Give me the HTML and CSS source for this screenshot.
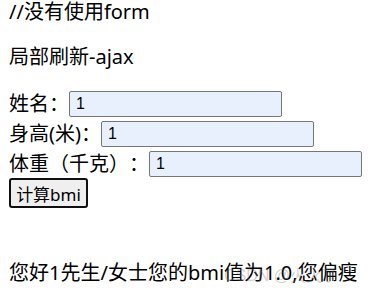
FILE: index.html
```html
<!DOCTYPE html>
<html lang="zh">
<head>
    <meta charset="UTF-8">
    <title>bmi</title>
    <link rel="stylesheet" href="styles.css">
</head>
<body>
    <div class="note">//没有使用form</div>
    <p class="title">局部刷新-ajax</p>
    <div class="form">
        <div class="row">姓名：<input type="text" class="field" value="1"></div>
        <div class="row">身高(米)：<input type="text" class="field" value="1"></div>
        <div class="row">体重（千克）：<input type="text" class="field" value="1"></div>
        <button type="button" class="btn">计算bmi</button>
    </div>
    <p class="result">您好1先生/女士您的bmi值为1.0,您偏瘦</p>
    <span class="mark">CSDN @火火了</span>
</body>
</html>
```

FILE: styles.css
```css
body {
    font-family: "Noto Sans", "Noto Sans CJK SC", sans-serif;
    font-size: 20px;
    color: #000;
    margin: 0 0 0 9px;
    background: #fff;
    position: relative;
    height: 297px;
    overflow: hidden;
    text-spacing-trim: space-all;
}
.note {
    line-height: 24px;
    margin: 0;
}
.title {
    margin: 21px 0 0;
    line-height: 24px;
}
.form {
    margin-top: 20px;
}
.row {
    height: 30px;
    line-height: 30px;
    display: flex;
    align-items: center;
}
.field {
    width: 213px;
    height: 26px;
    box-sizing: border-box;
    border: 1px solid #767676;
    border-radius: 2px;
    background-color: #e8f0fe;
    padding: 0 6px;
    font-family: "Liberation Sans", sans-serif;
    font-size: 16px;
    margin: 0;
}
.btn {
    margin-top: -1px;
    height: 30px;
    width: 79px;
    border: 2px solid #101010;
    border-radius: 3px;
    background-color: #efefef;
    font-family: "Noto Sans", "Noto Sans CJK SC", sans-serif;
    font-size: 17px;
    padding: 0;
    color: #000;
}
.result {
    margin: 53px 0 0;
    line-height: 24px;
}
.mark {
    position: absolute;
    left: 215px;
    top: 266px;
    color: rgba(120, 120, 120, 0.35);
    font-size: 16px;
    font-family: "Liberation Sans", sans-serif;
}
```
